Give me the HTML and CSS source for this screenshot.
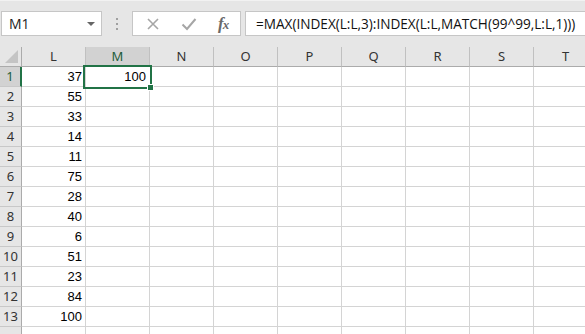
FILE: index.html
```html
<!DOCTYPE html>
<html lang="en">
<head>
    <meta charset="UTF-8">
    <title>Sheet</title>
    <link rel="stylesheet" href="styles.css">
</head>
<body>
    <div class="toolbar">
        <div class="namebox">
            <span>M1</span>
            <span class="caret"></span>
        </div>
        <div class="grip"><i></i><i></i><i></i></div>
        <div class="buttons">
            <svg class="btn" width="14" height="14" viewBox="0 0 14 14"><path d="M2 2 L12 12 M12 2 L2 12" stroke="#a6a6a6" stroke-width="1.6" fill="none"/></svg>
            <svg class="btn" width="16" height="14" viewBox="0 0 16 14"><path d="M1.5 7.5 L6 12 L14.5 2" stroke="#a6a6a6" stroke-width="2" fill="none"/></svg>
            <span class="fx">f<sub>x</sub></span>
        </div>
        <div class="formula">=MAX(INDEX(L:L,3):INDEX(L:L,MATCH(99^99,L:L,1)))</div>
    </div>

    <div class="sheet">
        <div class="row head">
            <div class="corner"><span></span></div>
            <div class="col">L</div>
            <div class="col sel">M</div>
            <div class="col">N</div>
            <div class="col">O</div>
            <div class="col">P</div>
            <div class="col">Q</div>
            <div class="col">R</div>
            <div class="col">S</div>
            <div class="col">T</div>
        </div>
        <div class="row">
            <div class="num sel">1</div>
            <div class="cell">37</div><div class="cell active">100</div><div class="cell"></div><div class="cell"></div><div class="cell"></div><div class="cell"></div><div class="cell"></div><div class="cell"></div><div class="cell"></div>
        </div>
        <div class="row">
            <div class="num">2</div>
            <div class="cell">55</div><div class="cell"></div><div class="cell"></div><div class="cell"></div><div class="cell"></div><div class="cell"></div><div class="cell"></div><div class="cell"></div><div class="cell"></div>
        </div>
        <div class="row">
            <div class="num">3</div>
            <div class="cell">33</div><div class="cell"></div><div class="cell"></div><div class="cell"></div><div class="cell"></div><div class="cell"></div><div class="cell"></div><div class="cell"></div><div class="cell"></div>
        </div>
        <div class="row">
            <div class="num">4</div>
            <div class="cell">14</div><div class="cell"></div><div class="cell"></div><div class="cell"></div><div class="cell"></div><div class="cell"></div><div class="cell"></div><div class="cell"></div><div class="cell"></div>
        </div>
        <div class="row">
            <div class="num">5</div>
            <div class="cell">11</div><div class="cell"></div><div class="cell"></div><div class="cell"></div><div class="cell"></div><div class="cell"></div><div class="cell"></div><div class="cell"></div><div class="cell"></div>
        </div>
        <div class="row">
            <div class="num">6</div>
            <div class="cell">75</div><div class="cell"></div><div class="cell"></div><div class="cell"></div><div class="cell"></div><div class="cell"></div><div class="cell"></div><div class="cell"></div><div class="cell"></div>
        </div>
        <div class="row">
            <div class="num">7</div>
            <div class="cell">28</div><div class="cell"></div><div class="cell"></div><div class="cell"></div><div class="cell"></div><div class="cell"></div><div class="cell"></div><div class="cell"></div><div class="cell"></div>
        </div>
        <div class="row">
            <div class="num">8</div>
            <div class="cell">40</div><div class="cell"></div><div class="cell"></div><div class="cell"></div><div class="cell"></div><div class="cell"></div><div class="cell"></div><div class="cell"></div><div class="cell"></div>
        </div>
        <div class="row">
            <div class="num">9</div>
            <div class="cell">6</div><div class="cell"></div><div class="cell"></div><div class="cell"></div><div class="cell"></div><div class="cell"></div><div class="cell"></div><div class="cell"></div><div class="cell"></div>
        </div>
        <div class="row">
            <div class="num">10</div>
            <div class="cell">51</div><div class="cell"></div><div class="cell"></div><div class="cell"></div><div class="cell"></div><div class="cell"></div><div class="cell"></div><div class="cell"></div><div class="cell"></div>
        </div>
        <div class="row">
            <div class="num">11</div>
            <div class="cell">23</div><div class="cell"></div><div class="cell"></div><div class="cell"></div><div class="cell"></div><div class="cell"></div><div class="cell"></div><div class="cell"></div><div class="cell"></div>
        </div>
        <div class="row">
            <div class="num">12</div>
            <div class="cell">84</div><div class="cell"></div><div class="cell"></div><div class="cell"></div><div class="cell"></div><div class="cell"></div><div class="cell"></div><div class="cell"></div><div class="cell"></div>
        </div>
        <div class="row">
            <div class="num">13</div>
            <div class="cell">100</div><div class="cell"></div><div class="cell"></div><div class="cell"></div><div class="cell"></div><div class="cell"></div><div class="cell"></div><div class="cell"></div><div class="cell"></div>
        </div>
        <div class="row">
            <div class="num"></div>
            <div class="cell"></div><div class="cell"></div><div class="cell"></div><div class="cell"></div><div class="cell"></div><div class="cell"></div><div class="cell"></div><div class="cell"></div><div class="cell"></div>
        </div>
    </div>
</body>
</html>
```

FILE: styles.css
```css
html, body {
    margin: 0;
    padding: 0;
    background: #fff;
    font-family: "Open Sans", "Noto Sans", sans-serif;
    overflow: hidden;
}
.toolbar {
    display: flex;
    align-items: center;
    height: 47px;
    padding: 0 0 0 1px;
    box-sizing: border-box;
    background: #e6e6e6;
    border-top: 1px solid #f2f2f2;
}
.namebox {
    display: flex;
    align-items: center;
    justify-content: space-between;
    width: 101px;
    height: 25px;
    margin-top: -1px;
    padding: 0 6px 0 7px;
    box-sizing: border-box;
    background: #fff;
    border: 1px solid #c6c6c6;
    font-size: 14px;
    color: #222;
}
.caret {
    width: 0;
    height: 0;
    border-left: 4px solid transparent;
    border-right: 4px solid transparent;
    border-top: 4px solid #666;
}
.grip {
    display: flex;
    flex-direction: column;
    gap: 3px;
    margin: 0 14px 0 14px;
}
.grip i {
    display: block;
    width: 2px;
    height: 2px;
    background: #a0a0a0;
}
.buttons {
    display: flex;
    align-items: center;
    width: 109px;
    height: 25px;
    margin-top: -1px;
    padding: 0 8px 0 13px;
    box-sizing: border-box;
    background: #fff;
    border: 1px solid #c6c6c6;
    gap: 21px;
}
.fx {
    font-family: "Liberation Serif", serif;
    font-style: italic;
    font-weight: bold;
    font-size: 17px;
    line-height: 1;
    color: #6a6a6a;
    letter-spacing: -1px;
}
.fx sub {
    font-size: 13px;
    vertical-align: 0;
}
.formula {
    flex: 1;
    height: 25px;
    margin: -1px 0 0 4px;
    padding: 0 0 0 10px;
    box-sizing: border-box;
    background: #fff;
    border: 1px solid #c6c6c6;
    border-right: none;
    font-size: 13.6px;
    line-height: 23px;
    color: #111;
    white-space: nowrap;
}
.sheet {
    font-size: 13px;
}
.row {
    display: grid;
    grid-template-columns: 22px repeat(9, 64px);
    height: 20px;
}
.head {
    background: #e6e6e6;
}
.corner {
    position: relative;
    border-right: 1px solid #ababab;
    border-bottom: 1px solid #ababab;
}
.corner span {
    position: absolute;
    right: 3px;
    bottom: 3px;
    width: 0;
    height: 0;
    border-left: 13px solid transparent;
    border-bottom: 13px solid #c4c4c4;
}
.col {
    border-right: 1px solid #c0c0c0;
    border-bottom: 1px solid #ababab;
    text-align: center;
    line-height: 19px;
    color: #333;
    font-family: "Noto Sans", sans-serif;
}
.col.sel {
    background: #d2d2d2;
    color: #1e5c3a;
}
.num {
    background: #e6e6e6;
    border-right: 1px solid #ababab;
    border-bottom: 1px solid #c8c8c8;
    text-align: center;
    line-height: 19px;
    color: #333;
    font-family: "Noto Sans", sans-serif;
}
.num.sel {
    background: #d2d2d2;
    color: #1e5c3a;
    border-right: 2px solid #217346;
}
.cell {
    border-right: 1px solid #d4d4d4;
    border-bottom: 1px solid #d4d4d4;
    text-align: right;
    padding-right: 3px;
    line-height: 19px;
    font-family: "Liberation Sans", sans-serif;
    color: #000;
}
.cell.active {
    position: relative;
    outline: 2px solid #217346;
    outline-offset: 0;
    margin: 0 0 0 -1px;
    border-color: transparent;
    z-index: 1;
}
.cell.active::after {
    content: "";
    position: absolute;
    right: -5px;
    bottom: -5px;
    width: 5px;
    height: 5px;
    background: #217346;
    border: 1px solid #fff;
}
```
